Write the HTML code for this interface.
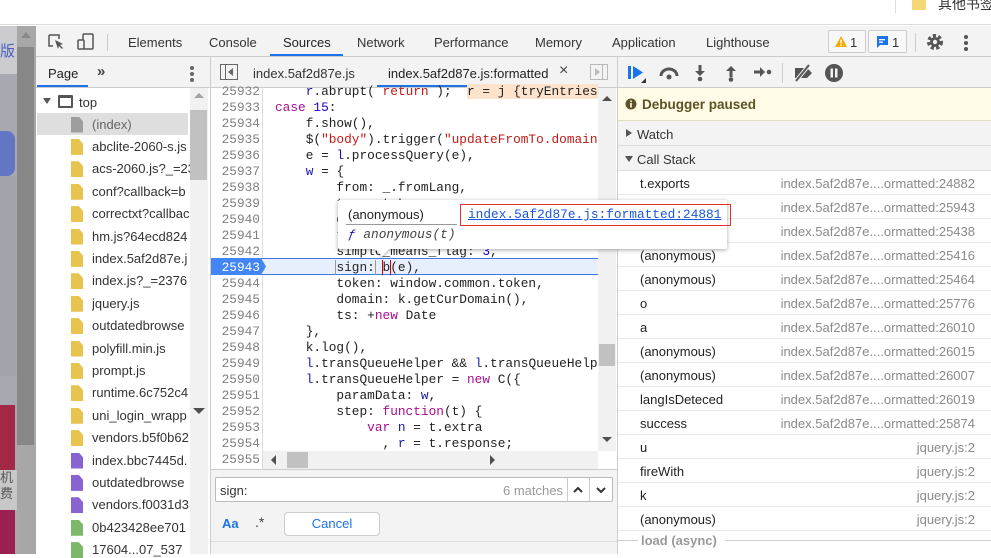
<!DOCTYPE html>
<html><head><meta charset="utf-8"><style>
*{box-sizing:border-box;margin:0;padding:0}
body{width:991px;height:554px;overflow:hidden;background:#fff;font-family:"Liberation Sans","Noto Sans CJK SC",sans-serif;font-size:13px;color:#333;position:relative}
.a{position:absolute;white-space:nowrap}
.mono{font-family:"Liberation Mono",monospace;font-size:12.8px}
.tab{top:35px;font-size:13px;color:#333}
.nav{left:92px;font-size:13px;color:#333}
.fi{position:absolute;width:12px;height:16px;left:71px}
.cs{left:618px;width:373px;height:24px;border-bottom:1px solid #e8e8e8;background:#fff}
.cs span{position:absolute;top:5px}
.cs .l{left:22px;color:#222}
.cs .r{right:16px;color:#8a8a8a}
.k{color:#aa0d91}.n{color:#1c00cf}.s{color:#c41a16}.v{color:#1a1aa6}
.tt{z-index:10}
</style></head><body>
<div class="a" style="left:0;top:0;width:991px;height:25px;background:#fff;border-bottom:1px solid #dcdcdc"></div>
<div class="a" style="left:895px;top:0;width:1px;height:13px;background:#ddd"></div>
<div class="a" style="left:912px;top:0;width:14px;height:10px;background:#f6d776;border-radius:1px"></div>
<div class="a" style="left:938px;top:-6px;font-size:14px;color:#333">其他书签</div>
<div class="a" style="left:0;top:26px;width:17px;height:528px;background:#a8a9b0"></div>
<div class="a" style="left:0;top:26px;width:17px;height:48px;background:#ccccd0"></div>
<div class="a" style="left:0;top:40px;color:#4a5fc0;font-size:15px">版</div>
<div class="a" style="left:0;top:131px;width:15px;height:45px;background:#6177c4;border-radius:0 8px 8px 0"></div>
<div class="a" style="left:0;top:176px;width:17px;height:200px;background:#a3a4ab"></div>
<div class="a" style="left:0;top:405px;width:15px;height:65px;background:#a32845"></div>
<div class="a" style="left:0;top:470px;width:17px;height:40px;background:#c8c8c8;font-size:13px;color:#555;line-height:16px">机<br>费</div>
<div class="a" style="left:0;top:510px;width:15px;height:44px;background:#9a2050"></div>
<div class="a" style="left:17px;top:26px;width:19px;height:528px;background:#a7a7a7"></div>
<div class="a" style="left:17px;top:47px;width:17px;height:398px;background:#878787"></div>
<div class="a" style="left:21px;top:32px;width:0;height:0;border:5px solid transparent;border-bottom:6px solid #888;border-top:0"></div>
<div class="a" style="left:36px;top:26px;width:955px;height:31px;background:#f3f3f3;border-bottom:1px solid #ccc"></div>
<svg class="a" style="left:47px;top:33px" width="20" height="18" viewBox="0 0 20 18"><path d="M2 2h10v4M2 2v11h4" fill="none" stroke="#555" stroke-width="1.5"/><path d="M8 7l8 4-3 1 3 3-1 1-3-3-1 3z" fill="#555"/></svg>
<svg class="a" style="left:76px;top:32px" width="20" height="20" viewBox="0 0 20 20"><rect x="7" y="2" width="10" height="15" rx="1" fill="none" stroke="#555" stroke-width="1.5"/><rect x="2" y="8" width="6" height="9" rx="1" fill="#f3f3f3" stroke="#555" stroke-width="1.5"/></svg>
<div class="a" style="left:107px;top:34px;width:1px;height:17px;background:#ccc"></div>
<div class="a tab" style="left:128px">Elements</div>
<div class="a tab" style="left:209px">Console</div>
<div class="a tab" style="left:283px;color:#222">Sources</div>
<div class="a" style="left:270px;top:54px;width:73px;height:2px;background:#1a73e8"></div>
<div class="a tab" style="left:357px">Network</div>
<div class="a tab" style="left:434px">Performance</div>
<div class="a tab" style="left:535px">Memory</div>
<div class="a tab" style="left:612px">Application</div>
<div class="a tab" style="left:706px">Lighthouse</div>
<div class="a" style="left:828px;top:30px;width:38px;height:23px;border:1px solid #ccc;border-radius:2px;background:#f8f8f8"></div>
<svg class="a" style="left:834px;top:35px" width="14" height="13"><path d="M7 1L13 12H1z" fill="#f2ab00"/><rect x="6.3" y="4.5" width="1.4" height="4" fill="#fff"/><rect x="6.3" y="9.5" width="1.4" height="1.4" fill="#fff"/></svg>
<div class="a" style="left:850px;top:35px;color:#333">1</div>
<div class="a" style="left:868px;top:30px;width:39px;height:23px;border:1px solid #ccc;border-radius:2px;background:#f8f8f8"></div>
<svg class="a" style="left:876px;top:35px" width="13" height="14"><path d="M1 1h11v9H4l-3 3z" fill="#1a73e8"/><rect x="3" y="4" width="6" height="1.3" fill="#fff"/><rect x="3" y="6.5" width="4" height="1.3" fill="#fff"/></svg>
<div class="a" style="left:892px;top:35px;color:#333">1</div>
<div class="a" style="left:915px;top:33px;width:1px;height:19px;background:#ccc"></div>
<svg class="a" style="left:926px;top:33px" width="18" height="18" viewBox="0 0 18 18"><circle cx="9" cy="9" r="6" fill="none" stroke="#555" stroke-width="4" stroke-dasharray="3 2.2"/><circle cx="9" cy="9" r="5" fill="#555"/><circle cx="9" cy="9" r="2.2" fill="#f3f3f3"/></svg>
<div class="a" style="left:964px;top:35px;width:4px;height:4px;border-radius:2px;background:#555;box-shadow:0 6px 0 #555,0 12px 0 #555"></div>
<div class="a" style="left:36px;top:57px;width:955px;height:31px;background:#f3f3f3;border-bottom:1px solid #ccc"></div>
<div class="a" style="left:48px;top:66px;color:#222">Page</div>
<div class="a" style="left:37px;top:85px;width:51px;height:2px;background:#1a73e8"></div>
<div class="a" style="left:97px;top:63px;font-size:15px;color:#444;font-weight:bold">»</div>
<div class="a" style="left:190px;top:66px;width:4px;height:4px;border-radius:2px;background:#666;box-shadow:0 6px 0 #666,0 12px 0 #666"></div>
<div class="a" style="left:210px;top:57px;width:1px;height:497px;background:#ccc"></div>
<svg class="a" style="left:220px;top:64px" width="18" height="17"><rect x="0.5" y="0.5" width="17" height="15" fill="none" stroke="#666"/><rect x="5" y="1" width="1" height="14" fill="#666"/><path d="M13 4v8l-5-4z" fill="#666"/></svg>
<div class="a" style="left:253px;top:66px;color:#333">index.5af2d87e.js</div>
<div class="a" style="left:388px;top:66px;color:#222">index.5af2d87e.js:formatted</div>
<div class="a" style="left:559px;top:62px;font-size:16px;color:#444">×</div>
<div class="a" style="left:377px;top:85px;width:197px;height:2px;background:#1a73e8"></div>
<svg class="a" style="left:590px;top:64px" width="18" height="17"><rect x="0.5" y="0.5" width="17" height="15" fill="none" stroke="#bbb"/><rect x="12" y="1" width="1" height="14" fill="#bbb"/><path d="M5 4v8l5-4z" fill="#bbb"/></svg>
<div class="a" style="left:617px;top:57px;width:1px;height:497px;background:#ccc"></div>
<svg class="a" style="left:626px;top:64px" width="24" height="20"><rect x="2" y="2" width="3" height="13" fill="#1a73e8"/><path d="M7 2l10 6.5L7 15z" fill="#1a73e8"/><path d="M20 19h-5l5-5z" fill="#333"/></svg>
<svg class="a" style="left:658px;top:65px" width="22" height="16"><path d="M3 11a8 7 0 0 1 16 0" fill="none" stroke="#555" stroke-width="3"/><circle cx="11" cy="12" r="2.5" fill="#555"/></svg>
<svg class="a" style="left:693px;top:63px" width="14" height="20"><rect x="5.5" y="2" width="3" height="7" fill="#555"/><path d="M2 8h10l-5 5z" fill="#555"/><circle cx="7" cy="16" r="2.3" fill="#555"/></svg>
<svg class="a" style="left:724px;top:63px" width="14" height="20"><rect x="5.5" y="7" width="3" height="7" fill="#555"/><path d="M2 8h10l-5-5z" fill="#555"/><circle cx="7" cy="16.5" r="2.3" fill="#555"/></svg>
<svg class="a" style="left:752px;top:64px" width="22" height="16"><rect x="2" y="6.5" width="7" height="3" fill="#555"/><path d="M8 3v10l5-5z" fill="#555"/><circle cx="17" cy="8" r="2.3" fill="#555"/></svg>
<div class="a" style="left:782px;top:63px;width:1px;height:20px;background:#ccc"></div>
<svg class="a" style="left:792px;top:63px" width="22" height="20"><path d="M3 5h12l5 5-5 5H3z" fill="#555"/><path d="M4 18L17 2" stroke="#f3f3f3" stroke-width="4"/><path d="M4 18L17 2" stroke="#555" stroke-width="2"/></svg>
<svg class="a" style="left:824px;top:63px" width="20" height="20"><circle cx="10" cy="10" r="9" fill="#555"/><rect x="6.5" y="5.5" width="2.5" height="9" fill="#f3f3f3"/><rect x="11" y="5.5" width="2.5" height="9" fill="#f3f3f3"/></svg>
<div class="a" style="left:36px;top:88px;width:174px;height:466px;background:#fff"></div>
<div class="a" style="left:190px;top:88px;width:18px;height:466px;background:#f1f1f1"></div>
<div class="a" style="left:190px;top:110px;width:17px;height:70px;background:#c1c1c1"></div>
<div class="a" style="left:194px;top:93px;width:0;height:0;border:5px solid transparent;border-bottom:5px solid #a3a3a3;border-top:0"></div>
<div class="a" style="left:193px;top:408px;width:0;height:0;border:6px solid transparent;border-top:6px solid #505050;border-bottom:0"></div>
<div class="a" style="left:37px;top:113px;width:151px;height:22px;background:#dedede"></div>
<div class="a" style="left:43px;top:98px;width:0;height:0;border:4px solid transparent;border-top:6px solid #555;border-bottom:0"></div>
<div class="a" style="left:58px;top:95px;width:15px;height:13px;border:2px solid #555;border-top-width:3px;border-radius:1px"></div>
<div class="a nav" style="left:79px;top:95px">top</div>
<div id="files"></div>
<div class="a" style="left:211px;top:88px;width:52px;height:385px;background:#fff;border-right:1px solid #ddd"></div>
<div class="a" style="left:598px;top:88px;width:18px;height:363px;background:#f1f1f1"></div>
<div class="a" style="left:599px;top:344px;width:16px;height:22px;background:#c1c1c1"></div>
<div class="a" style="left:602px;top:96px;width:0;height:0;border:5px solid transparent;border-bottom:5px solid #505050;border-top:0"></div>
<div class="a" style="left:602px;top:437px;width:0;height:0;border:5px solid transparent;border-top:5px solid #505050;border-bottom:0"></div>
<div class="a" style="left:263px;top:451px;width:335px;height:18px;background:#f1f1f1"></div>
<div class="a" style="left:287px;top:452px;width:21px;height:16px;background:#c1c1c1"></div>
<div class="a" style="left:271px;top:455px;width:0;height:0;border:5px solid transparent;border-right:5px solid #505050;border-left:0"></div>
<div class="a" style="left:490px;top:455px;width:0;height:0;border:5px solid transparent;border-left:5px solid #505050;border-right:0"></div>
<div class="a" style="left:211px;top:258px;width:387px;height:17px;background:#e8effc;border-top:1px solid #3f7ae4;border-bottom:1px solid #3f7ae4"></div>
<svg class="a" style="left:211px;top:258px" width="57" height="17"><path d="M0 0h50l5 8.5-5 8.5H0z" fill="#4285f4"/></svg>
<div id="code" class="a mono" style="left:0;top:0;width:598px;height:469px;overflow:hidden"></div>
<div class="a" style="left:211px;top:469px;width:406px;height:85px;background:#f3f3f3;border-top:1px solid #ccc"></div>
<div class="a" style="left:215px;top:477px;width:398px;height:25px;border:1px solid #bbb;background:#fff;border-radius:2px"></div>
<div class="a" style="left:220px;top:483px;color:#333">sign:</div>
<div class="a" style="left:503px;top:483px;color:#999">6 matches</div>
<div class="a" style="left:567px;top:478px;width:1px;height:23px;background:#ccc"></div>
<div class="a" style="left:589px;top:478px;width:1px;height:23px;background:#ccc"></div>
<svg class="a" style="left:572px;top:484px" width="40" height="12"><path d="M2 8l4-4 4 4" fill="none" stroke="#333" stroke-width="2"/><path d="M25 4l4 4 4-4" fill="none" stroke="#333" stroke-width="2"/></svg>
<div class="a" style="left:222px;top:516px;color:#1a73e8;font-weight:bold;font-size:13px">Aa</div>
<div class="a" style="left:255px;top:514px;color:#444;font-size:14px">.*</div>
<div class="a" style="left:284px;top:512px;width:96px;height:24px;border:1px solid #ccc;border-radius:4px;background:#fff;text-align:center;line-height:22px;color:#1a73e8">Cancel</div>
<div class="a" style="left:211px;top:541px;width:406px;height:1px;background:#ddd"></div>
<div class="a" style="left:618px;top:88px;width:373px;height:33px;background:#fffbe6;border-bottom:1px solid #e0dcc0"></div>
<svg class="a" style="left:625px;top:98px" width="12" height="12"><circle cx="6" cy="6" r="5.5" fill="#5c5223"/><rect x="5.2" y="5" width="1.6" height="4.5" fill="#fff"/><rect x="5.2" y="2.5" width="1.6" height="1.6" fill="#fff"/></svg>
<div class="a" style="left:642px;top:97px;font-weight:bold;color:#5c5223;font-size:13.5px">Debugger paused</div>
<div class="a" style="left:618px;top:121px;width:373px;height:25px;background:#f3f3f3;border-bottom:1px solid #ddd"></div>
<div class="a" style="left:626px;top:129px;width:0;height:0;border:4px solid transparent;border-left:6px solid #555;border-right:0"></div>
<div class="a" style="left:637px;top:127px;color:#333">Watch</div>
<div class="a" style="left:618px;top:146px;width:373px;height:25px;background:#f3f3f3;border-bottom:1px solid #ddd"></div>
<div class="a" style="left:625px;top:156px;width:0;height:0;border:4px solid transparent;border-top:6px solid #555;border-bottom:0"></div>
<div class="a" style="left:637px;top:152px;color:#333">Call Stack</div>
<div id="cs"></div>
<div class="a" style="left:618px;top:540px;width:20px;height:1px;background:#ccc"></div>
<div class="a" style="left:641px;top:533px;color:#999;font-weight:bold">load (async)</div>
<div class="a" style="left:725px;top:540px;width:266px;height:1px;background:#ccc"></div>
<!-- tooltip on top -->
<div class="a tt" style="left:338px;top:200px;width:389px;height:49px;background:#fff;box-shadow:0 1px 4px rgba(0,0,0,.35);border-radius:2px"></div>
<div class="a tt" style="left:377px;top:244px;width:10px;height:10px;background:#fff;transform:rotate(45deg);box-shadow:2px 2px 2px rgba(0,0,0,.15)"></div>
<div class="a tt" style="left:348px;top:207px;font-size:13px;color:#222">(anonymous)</div>
<div class="a tt" style="left:346px;top:224px;width:111px;height:1px;background:#999"></div>
<div class="a tt" style="left:460px;top:204px;width:271px;height:22px;border:1px solid #e03030"></div>
<div class="a mono tt" style="left:468px;top:207px;color:#1a57d8;text-decoration:underline">index.5af2d87e.js:formatted:24881</div>
<div class="a mono tt" style="left:348px;top:227px;color:#444;font-style:italic"><span style="color:#1a1aa6">ƒ</span> anonymous(t)</div>
<script>
var files=[["(index)","#9e9e9e",1],["abclite-2060-s.js"],["acs-2060.js?_=23"],["conf?callback=b"],["correctxt?callbac"],["hm.js?64ecd824"],["index.5af2d87e.j"],["index.js?_=2376"],["jquery.js"],["outdatedbrowse"],["polyfill.min.js"],["prompt.js"],["runtime.6c752c4"],["uni_login_wrapp"],["vendors.b5f0b62"],["index.bbc7445d.","#8a63d2"],["outdatedbrowse","#8a63d2"],["vendors.f0031d3","#8a63d2"],["0b423428ee701","#7cb86a"],["17604...07_537","#7cb86a"]];
var h="";files.forEach(function(f,i){var y=124.5+i*22.4;var c=f[1]||"#e8c34d";
h+='<div class="fi" style="top:'+(y-8)+'px;background:'+c+';clip-path:polygon(0 0,65% 0,100% 30%,100% 100%,0 100%)"></div><div class="a nav" style="top:'+(y-8)+'px;width:98px;overflow:hidden;color:'+(f[2]?'#666':'#333')+'">'+f[0]+'</div>';});
document.getElementById("files").innerHTML=h;
var L=[
'    <span class="v">r</span>.abrupt( <span class="s">return</span> );  <span style="background:#fde3cc">r = j {tryEntries:</span>',
'<span class="k">case</span> <span class="n">15</span>:',
'    f.show(),',
'    $(<span class="s">"body"</span>).trigger(<span class="s">"updateFromTo.domainTr</span>',
'    e = <span class="v">l</span>.processQuery(e),',
'    <span class="v">w</span> = {',
'        from: _.fromLang,',
'        to: _.toLang,',
'        query: e,',
'        transtype: e,',
'        simple_means_flag: <span class="n">3</span>,',
'        <span style="outline:1px solid #999">sign:</span> <span style="outline:1px solid #c00">b</span>(e),',
'        token: window.common.token,',
'        domain: k.getCurDomain(),',
'        ts: +<span class="k">new</span> Date',
'    },',
'    k.log(),',
'    <span class="v">l</span>.transQueueHelper &amp;&amp; <span class="v">l</span>.transQueueHelper.destroy(),',
'    <span class="v">l</span>.transQueueHelper = <span class="k">new</span> C({',
'        paramData: <span class="v">w</span>,',
'        step: <span class="k">function</span>(t) {',
'            <span class="k">var</span> <span class="v">n</span> = t.extra',
'              , <span class="v">r</span> = t.response;',
'',
''];
var c="";L.forEach(function(s,i){var y=84+i*16;
c+='<div class="a" style="top:'+y+'px;left:210px;width:50px;text-align:right;color:'+(i==11?'#fff':'#808080')+'">'+(25932+i)+'</div>';
if(i<23)c+='<div class="a" style="top:'+y+'px;left:275px;width:323px;overflow:hidden;color:#222;white-space:pre">'+s+'</div>';});
document.getElementById("code").innerHTML=c;
var S=[["t.exports","index.5af2d87e....ormatted:24882"],["","index.5af2d87e....ormatted:25943"],["","index.5af2d87e....ormatted:25438"],["(anonymous)","index.5af2d87e....ormatted:25416"],["(anonymous)","index.5af2d87e....ormatted:25464"],["o","index.5af2d87e....ormatted:25776"],["a","index.5af2d87e....ormatted:26010"],["(anonymous)","index.5af2d87e....ormatted:26015"],["(anonymous)","index.5af2d87e....ormatted:26007"],["langIsDeteced","index.5af2d87e....ormatted:26019"],["success","index.5af2d87e....ormatted:25874"],["u","jquery.js:2"],["fireWith","jquery.js:2"],["k","jquery.js:2"],["(anonymous)","jquery.js:2"]];
var q="";S.forEach(function(s,i){q+='<div class="a cs" style="top:'+(171+i*24)+'px"><span class="l">'+s[0]+'</span><span class="r">'+s[1]+'</span></div>';});
document.getElementById("cs").innerHTML=q;
</script>
</body></html>
